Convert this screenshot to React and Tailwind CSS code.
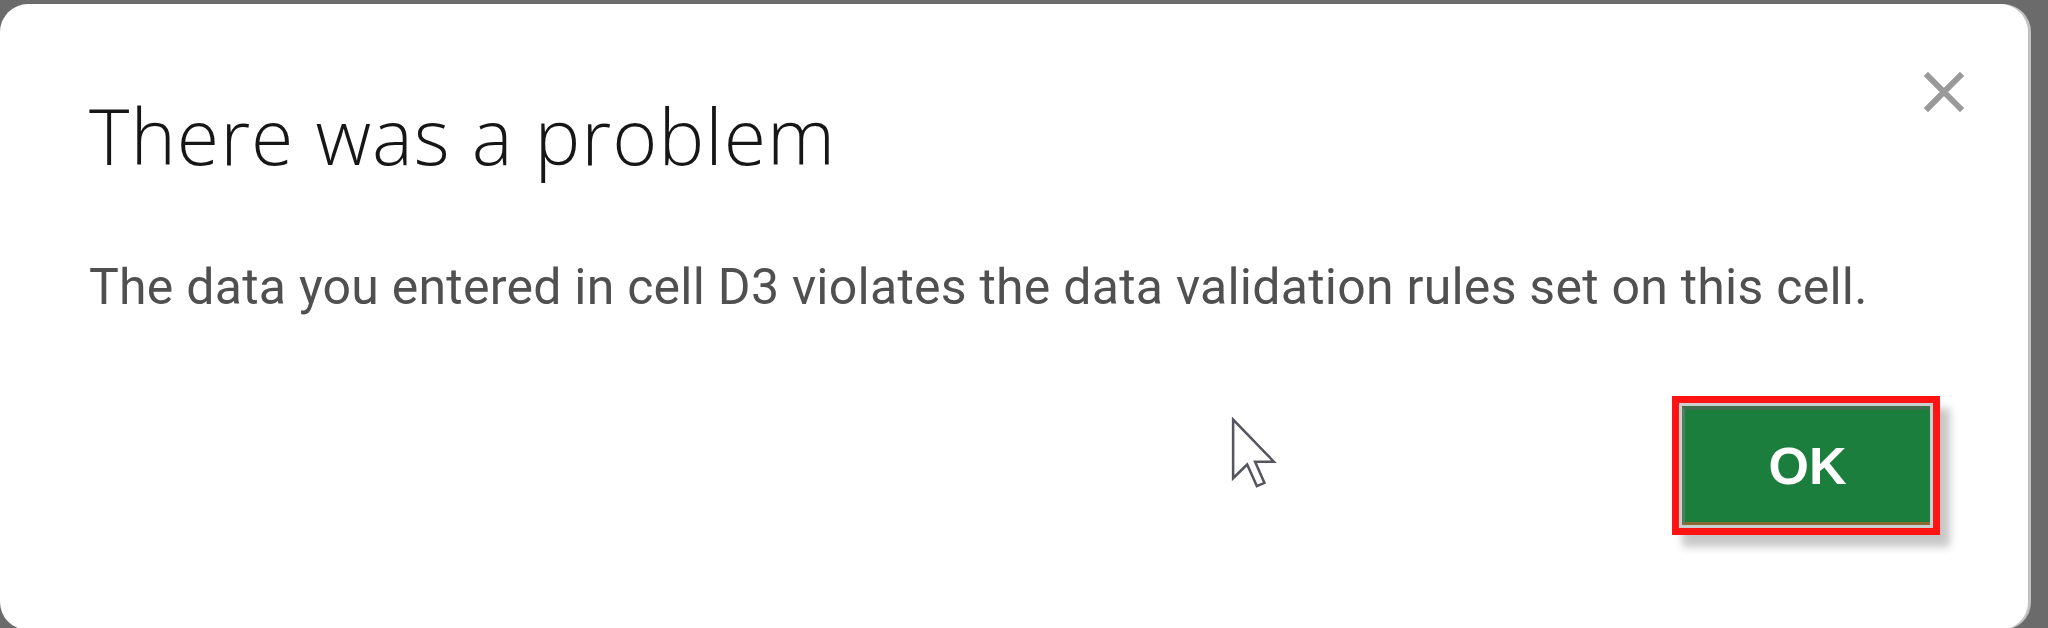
import React from 'react';

function CloseIcon() {
  return (
    <svg width="40" height="40" viewBox="0 0 40 40" className="block">
      <path d="M4 4 L36 36 M36 4 L4 36" stroke="#9a9a9a" strokeWidth="6" strokeLinecap="square" />
    </svg>
  );
}

function Pointer() {
  return (
    <svg width="48" height="72" viewBox="0 0 13 20" className="absolute left-[1230px] top-[413px]">
      <path
        d="M0.7 0.7 L0.7 17 L4.6 13.2 L7.3 19.2 L9.4 18.3 L6.8 12.4 L12 12.4 Z"
        fill="#ffffff"
        stroke="#55555f"
        strokeWidth="0.7"
        strokeLinejoin="miter"
      />
    </svg>
  );
}

export default function App() {
  return (
    <div className="h-[628px] w-[2048px] overflow-hidden bg-[#6b6b6b] pt-[4px]">
      <div className="relative h-[626px] w-[2028px] rounded-[28px] bg-white shadow-[3px_0_0_#c2c2c2] pl-[89px] pr-[64px] pt-[64px]">
        {/* Header */}
        <div className="flex items-start justify-between">
          <h1 className="mt-[29px] text-[77px] leading-none font-light tracking-[1px] text-[#161616] [font-family:'Open_Sans',Lato,sans-serif]">
            There was a problem
          </h1>
          <button className="mt-[4px] p-0">
            <CloseIcon />
          </button>
        </div>

        {/* Body */}
        <p className="mt-[88px] text-[50px] leading-none tracking-[0.25px] text-[#505050] [font-family:Roboto,'Liberation_Sans',sans-serif]">
          The data you entered in cell D3 violates the data validation rules set on this cell.
        </p>

        {/* Footer */}
        <div className="mt-[84px] flex justify-end pr-[24px]">
          <div className="border-[7px] border-[#ff1414] bg-[#c8cfcf] p-[3px] shadow-[10px_12px_8px_rgba(0,0,0,0.22)]">
            <div className="flex h-[119px] w-[248px] items-center justify-center border-t-[4px] border-l-[3px] border-b-[3px] border-t-[#3f6d4e] border-l-[#4f8160] border-b-[#8a6a34] bg-[#1c7e3c]">
              <span className="text-[52px] leading-none font-bold text-white [font-family:'Liberation_Sans',Arial,sans-serif]">
                OK
              </span>
            </div>
          </div>
        </div>

        <Pointer />
      </div>
    </div>
  );
}
